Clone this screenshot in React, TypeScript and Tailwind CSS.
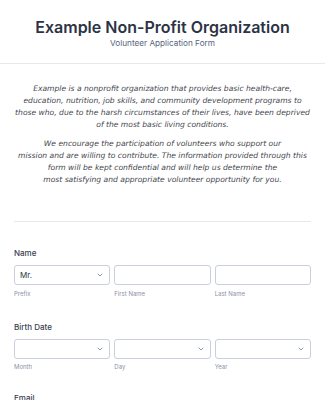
import { ChevronDown } from "lucide-react";

const Select = ({ value }: { value?: string }) => (
  <div className="h-[20px] border border-[#c9cfdb] rounded-[3px] bg-white flex items-center justify-between pl-[5px] pr-[5px]">
    <span className="text-[8px] text-[#2c3345]">{value}</span>
    <ChevronDown className="w-[8px] h-[8px] text-[#57647e]" strokeWidth={2} />
  </div>
);

const Input = () => (
  <div className="h-[20px] border border-[#c9cfdb] rounded-[3px] bg-white" />
);

const Sub = ({ children }: { children: string }) => (
  <p className="text-[6px] leading-[10px] text-[#8d8fa8]">{children}</p>
);

export default function App() {
  return (
    <div className="bg-white min-h-screen font-['Inter',sans-serif] text-[#2c3345]">
      <header className="pt-[17px] pb-[15px] border-b border-[#e6e8ee] text-center">
        <h1 className="text-[16px] leading-[20px] font-semibold">Example Non-Profit Organization</h1>
        <p className="mt-[1px] text-[8.2px] leading-[10px] text-[#57647e]">Volunteer Application Form</p>
      </header>

      <section className="px-[14px]">
        <div className="mt-[19px] text-center italic text-[#45484f] font-['DejaVu_Sans',sans-serif] text-[7.6px] leading-[12px] whitespace-nowrap">
          <p>
            Example is a nonprofit organization that provides basic health-care,<br />
            education, nutrition, job skills, and community development programs to<br />
            those who, due to the harsh circumstances of their lives, have been deprived<br />
            of the most basic living conditions.
          </p>
          <p className="mt-[7px]">
            We encourage the participation of volunteers who support our<br />
            mission and are willing to contribute. The information provided through this<br />
            form will be kept confidential and will help us determine the<br />
            most satisfying and appropriate volunteer opportunity for you.
          </p>
        </div>

        <div className="mt-[35px] h-[1px] bg-[#e6e8ee]" />

        <div className="mt-[25px]">
          <p className="text-[8px] leading-[12px] font-medium text-[#3a4150]">Name</p>
          <div className="mt-[6px] grid grid-cols-3 gap-[4px]">
            <div>
              <Select value="Mr." />
              <div className="mt-[4px]"><Sub>Prefix</Sub></div>
            </div>
            <div>
              <Input />
              <div className="mt-[4px]"><Sub>First Name</Sub></div>
            </div>
            <div>
              <Input />
              <div className="mt-[4px]"><Sub>Last Name</Sub></div>
            </div>
          </div>
        </div>

        <div className="mt-[22px]">
          <p className="text-[8px] leading-[12px] font-medium text-[#3a4150]">Birth Date</p>
          <div className="mt-[6px] grid grid-cols-3 gap-[4px]">
            <div>
              <Select />
              <div className="mt-[3px]"><Sub>Month</Sub></div>
            </div>
            <div>
              <Select />
              <div className="mt-[3px]"><Sub>Day</Sub></div>
            </div>
            <div>
              <Select />
              <div className="mt-[3px]"><Sub>Year</Sub></div>
            </div>
          </div>
        </div>

        <div className="mt-[20px]">
          <p className="text-[8px] leading-[12px] font-medium text-[#3a4150]">Email</p>
        </div>
      </section>
    </div>
  );
}
